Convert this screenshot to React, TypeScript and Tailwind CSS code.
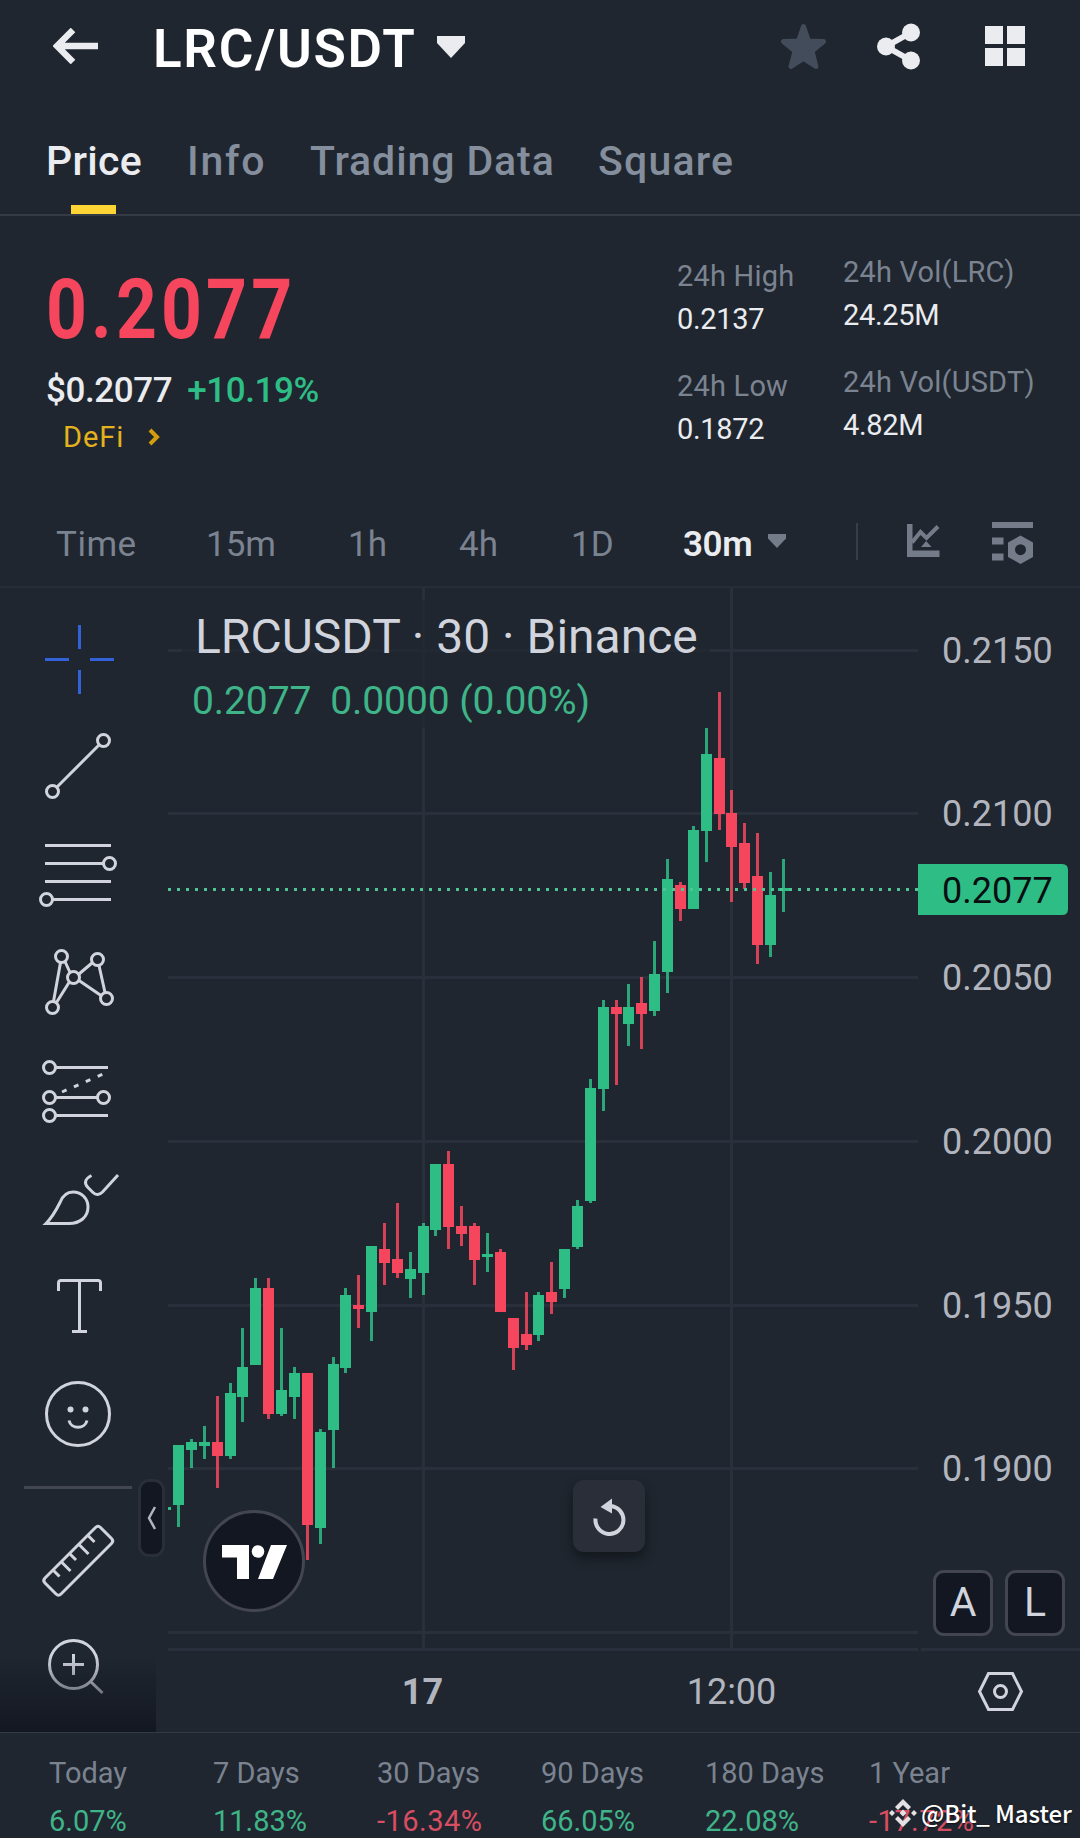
import React, { JSX } from "react";

interface Candle {
  x: number;
  high: number;
  top: number;
  bottom: number;
  low: number;
  up: boolean;
}

const UP = "#2ebd85";
const DOWN = "#f6465d";

// x, high, body top, body bottom, low, direction
const rawCandles: [number, number, number, number, number, number][] = [
  [178.5, 1445, 1445, 1505, 1527, 1],
  [191.5, 1439, 1442, 1450, 1468, 1],
  [204.5, 1426, 1442, 1446, 1459, 1],
  [217.5, 1396, 1442, 1456, 1488, 0],
  [230.5, 1383, 1393, 1456, 1459, 1],
  [242.5, 1328, 1367, 1397, 1422, 1],
  [255.5, 1278, 1288, 1365, 1365, 1],
  [268.5, 1278, 1288, 1414, 1419, 0],
  [281.5, 1328, 1390, 1414, 1416, 1],
  [294.5, 1367, 1373, 1397, 1419, 1],
  [307.5, 1373, 1373, 1525, 1560, 0],
  [320.5, 1429, 1432, 1528, 1544, 1],
  [333.5, 1357, 1364, 1430, 1468, 1],
  [345.5, 1288, 1295, 1368, 1373, 1],
  [358.5, 1275, 1305, 1309, 1328, 0],
  [371.5, 1246, 1246, 1312, 1341, 1],
  [384.5, 1223, 1249, 1263, 1285, 0],
  [397.5, 1203, 1259, 1273, 1278, 0],
  [410.5, 1252, 1269, 1279, 1298, 1],
  [423.5, 1223, 1226, 1273, 1295, 1],
  [435.5, 1164, 1164, 1230, 1236, 1],
  [448.5, 1151, 1164, 1227, 1249, 0],
  [461.5, 1206, 1226, 1234, 1246, 0],
  [474.5, 1223, 1226, 1260, 1285, 0],
  [487.5, 1233, 1254, 1257, 1272, 1],
  [500.5, 1249, 1252, 1312, 1312, 0],
  [513.5, 1318, 1318, 1348, 1370, 0],
  [526.5, 1292, 1334, 1345, 1350, 0],
  [538.5, 1292, 1295, 1335, 1341, 1],
  [551.5, 1262, 1292, 1302, 1314, 0],
  [564.5, 1249, 1249, 1289, 1298, 1],
  [577.5, 1200, 1206, 1247, 1249, 1],
  [590.5, 1079, 1088, 1201, 1203, 1],
  [603.5, 1000, 1007, 1089, 1111, 1],
  [616.5, 1000, 1007, 1014, 1085, 0],
  [628.5, 984, 1007, 1024, 1046, 1],
  [641.5, 977, 1003, 1014, 1049, 0],
  [654.5, 941, 974, 1011, 1016, 1],
  [667.5, 859, 879, 972, 993, 1],
  [680.5, 882, 885, 909, 921, 0],
  [693.5, 826, 830, 909, 909, 1],
  [706.5, 728, 754, 831, 862, 1],
  [719.5, 692, 758, 814, 830, 0],
  [731.5, 790, 813, 847, 902, 0],
  [744.5, 823, 843, 883, 889, 0],
  [757.5, 833, 876, 945, 964, 0],
  [770.5, 872, 895, 945, 957, 1],
  [783.5, 859, 888, 891, 912, 1],
];

const candles: Candle[] = rawCandles.map(([x, high, top, bottom, low, up]) => ({
  x,
  high,
  top,
  bottom,
  low,
  up: up === 1,
}));

const priceLevels = [
  { y: 650.5, label: "0.2150" },
  { y: 813.5, label: "0.2100" },
  { y: 977.5, label: "0.2050" },
  { y: 1141.5, label: "0.2000" },
  { y: 1305.5, label: "0.1950" },
  { y: 1468.5, label: "0.1900" },
  { y: 1632.5, label: "" },
];

const performance = [
  { label: "Today", value: "6.07%", up: true },
  { label: "7 Days", value: "11.83%", up: true },
  { label: "30 Days", value: "-16.34%", up: false },
  { label: "90 Days", value: "66.05%", up: true },
  { label: "180 Days", value: "22.08%", up: true },
  { label: "1 Year", value: "-17.72%", up: false },
];

const Header = () => (
  <header className="flex h-[92px] items-center">
    <svg width="46" height="36" viewBox="0 0 46 36" className="ml-[53px]" fill="none" stroke="#eaecef" strokeWidth="6.5">
      <path d="M45 18H5M20 2L4 18l16 16" />
    </svg>
    <h1 className="ml-[54px] w-[284px] pt-1.5 text-[53px] leading-none font-semibold tracking-[1.7px] whitespace-nowrap text-white">
      LRC/USDT
    </h1>
    <svg width="28" height="22" viewBox="0 0 28 22" className="mt-0.5" fill="#eaecef">
      <path d="M0 0h28v7L14 22 0 7z" />
    </svg>
    <svg width="45" height="47" viewBox="0 0 45 47" className="ml-[316px]" fill="#434c5a" stroke="#434c5a" strokeWidth="5" strokeLinejoin="round">
      <path d="M22.500 3.500l5 14.500 15 .5-11.500 9.500 4 15.500-12.500-8-12.500 8 4-15.500-11.500-9.500 15-.5z" />
    </svg>
    <svg width="43" height="47" viewBox="0 0 43 47" className="ml-[51px]" fill="#eaecef" stroke="#eaecef">
      <path d="M34 9.500L9 23.500l25 14" fill="none" strokeWidth="6" />
      <circle cx="34" cy="9.500" r="9" stroke="none" />
      <circle cx="9" cy="23.500" r="9" stroke="none" />
      <circle cx="34" cy="37.500" r="9" stroke="none" />
    </svg>
    <div className="ml-[65px] grid grid-cols-2 gap-1">
      <span className="h-[18px] w-[18px] bg-[#eaecef]" />
      <span className="h-[18px] w-[18px] bg-[#eaecef]" />
      <span className="h-[18px] w-[18px] bg-[#eaecef]" />
      <span className="h-[18px] w-[18px] bg-[#eaecef]" />
    </div>
  </header>
);

const Tabs = () => (
  <nav className="flex h-[124px] border-b-2 border-[#343b45] pt-[49px] text-[41px] leading-none font-medium tracking-[0.9px] whitespace-nowrap text-[#848e9c]">
    <div className="ml-[46px] flex w-[141px] flex-col text-[#eaecef]">
      <span className="tracking-[0.3px]">Price</span>
      <span className="mt-[23px] ml-[25px] h-[9px] w-[45px] bg-[#fcd535]" />
    </div>
    <span className="w-[123px] tracking-[1.8px]">Info</span>
    <span className="w-[288px]">Trading Data</span>
    <span className="tracking-[1.2px]">Square</span>
  </nav>
);

interface StatProps {
  label: string;
  value: string;
}

const Stat: React.FC<StatProps> = ({ label, value }) => (
  <div className="flex flex-col gap-[14px] text-[29px] leading-none whitespace-nowrap">
    <span className="tracking-[0.2px] text-[#7b8391]">{label}</span>
    <span className="tracking-[-0.3px] text-[#eaecef]">{value}</span>
  </div>
);

const Ticker = () => (
  <section className="flex h-[284px]">
    <div className="w-[677px] pt-[52px] pl-[46px]">
      <div className="w-fit origin-left scale-x-[0.86] text-[83px] leading-none font-bold tracking-[4.800px] text-[#f6465d]">0.2077</div>
      <div className="mt-[22px] flex gap-[15px] text-[35px] leading-none font-medium tracking-[-0.4px]">
        <span className="text-[#eaecef]">$0.2077</span>
        <span className="text-[#2ebd85]">+10.19%</span>
      </div>
      <div className="mt-[15px] flex items-center pl-[17px] text-[29px] leading-none text-[#e3b21c]">
        <span className="w-[85px] tracking-[0.9px]">DeFi</span>
        <svg width="12" height="18" viewBox="0 0 12 18" className="-mt-0.5" fill="none" stroke="#d29e0e" strokeWidth="4">
          <path d="M2 2l7 7-7 7" />
        </svg>
      </div>
    </div>
    <div className="flex w-[166px] flex-col gap-[38px] pt-[46px]">
      <Stat label="24h High" value="0.2137" />
      <Stat label="24h Low" value="0.1872" />
    </div>
    <div className="flex flex-col gap-[38px] pt-[42px]">
      <Stat label="24h Vol(LRC)" value="24.25M" />
      <Stat label="24h Vol(USDT)" value="4.82M" />
    </div>
  </section>
);

const Intervals = () => (
  <div className="flex h-[88px] items-center border-b-2 border-[#262d38] pl-[56px] text-[35px] leading-none whitespace-nowrap text-[#7b8391]">
    <span className="mt-0.5 w-[150px] tracking-[0.5px]">Time</span>
    <span className="mt-0.5 w-[142px]">15m</span>
    <span className="mt-0.5 w-[111px]">1h</span>
    <span className="mt-0.5 w-[112px]">4h</span>
    <span className="mt-0.5 w-[112px]">1D</span>
    <span className="mt-0.5 w-[85px] font-semibold tracking-[-0.4px] text-[#eaecef]">30m</span>
    <svg width="18" height="14" viewBox="0 0 18 14" className="-mt-1" fill="#747c8a">
      <path d="M0 0h18v4.500L9 14 0 4.500z" />
    </svg>
    <span className="-mt-1 ml-[70px] h-[37px] w-[2px] bg-[#373e49]" />
    <svg width="33" height="33" viewBox="0 0 33 33" className="-mt-1.5 ml-[49px]" fill="#747c8a">
      <path d="M0 0h5.500v26.500H32.500V33H0z" />
      <path d="M5 18.500l8.500-10.500 6 6L31 2.500" fill="none" stroke="#747c8a" strokeWidth="4" />
      <path d="M14 23h10.500L19.200 17z" />
    </svg>
    <svg width="42" height="43" viewBox="0 0 42 43" className="-mt-0.5 ml-[52px]" fill="#747c8a">
      <path d="M0 1h41v6H0zM0 16.500h11.500v7H0zM0 32.500h11.500v7H0z" />
      <path fillRule="evenodd" d="M28.500 14.500l12.500 7v14.500l-12.500 7-12.500-7V21.500zM28.500 23.200a5.500 5.500 0 1 0 0 11 5.500 5.500 0 1 0 0-11z" />
    </svg>
  </div>
);

interface ToolProps {
  viewBox: string;
  height: number;
  children: React.ReactNode;
}

const Tool: React.FC<ToolProps> = ({ viewBox, height, children }) => (
  <svg width="156" height={height} viewBox={viewBox} className="block shrink-0" fill="none" stroke="#d1d4dc" strokeWidth="3">
    {children}
  </svg>
);

const tools: { viewBox: string; height: number; icon: JSX.Element }[] = [
  {
    viewBox: "0 588 156 125",
    height: 125,
    icon: <path stroke="#3361d8" d="M79.500 625v24M79.500 670v24M45 659.500h24M90 659.500h24" />,
  },
  {
    viewBox: "0 713 156 106",
    height: 106,
    icon: (
      <>
        <path d="M57 787l42-42" />
        <circle cx="103.500" cy="740.500" r="6" />
        <circle cx="52.500" cy="791.500" r="6" />
      </>
    ),
  },
  {
    viewBox: "0 819 156 108",
    height: 108,
    icon: (
      <>
        <path d="M45 845.500h66M45 863.500h58M45 881.500h66M53 899.500h58" />
        <circle cx="109.500" cy="863.500" r="6" />
        <circle cx="46.500" cy="899.500" r="6" />
      </>
    ),
  },
  {
    viewBox: "0 927 156 109",
    height: 109,
    icon: (
      <>
        <path d="M60.500 962.500l-7 39M65 961.500l5 11M69 982.500l-12.500 20M79 974l13-11M79 980.500l22 15M99 965.500l6 27" />
        <circle cx="61.500" cy="956.500" r="6" />
        <circle cx="97.500" cy="959.500" r="6" />
        <circle cx="73.500" cy="977.500" r="6" />
        <circle cx="106.500" cy="998.500" r="6" />
        <circle cx="52.500" cy="1007.500" r="6" />
      </>
    ),
  },
  {
    viewBox: "0 1036 156 110",
    height: 110,
    icon: (
      <>
        <path d="M55.500 1067.500H108M55.500 1097.500H98M55.500 1115.500H108" />
        <path d="M62 1092l41-18" strokeDasharray="5 8" />
        <circle cx="49.500" cy="1067.500" r="6" />
        <circle cx="49.500" cy="1097.500" r="6" />
        <circle cx="103.500" cy="1097.500" r="6" />
        <circle cx="49.500" cy="1115.500" r="6" />
      </>
    ),
  },
  {
    viewBox: "0 1146 156 106",
    height: 106,
    icon: (
      <>
        <path d="M46 1223.500c7-7 10.500-14 14-21 2.500-6.500 7-10.500 13-10.500 9 0 15 7 15 15 0 10-8 16.500-19 16.500z" />
        <path d="M91.500 1175.500c-7 3.500-7.500 8-3.500 12l5 5c3 3 6.500 2.500 9.500-.5l15.500-17" />
      </>
    ),
  },
  {
    viewBox: "0 1252 156 108",
    height: 108,
    icon: <path d="M58.500 1291v-8q0-2.500 2.500-2.500h37q2.500 0 2.500 2.500v8M79.500 1281v50M72 1331.500h15" />,
  },
  {
    viewBox: "0 1360 156 108",
    height: 108,
    icon: (
      <>
        <circle cx="78" cy="1414" r="31.500" />
        <circle cx="70.500" cy="1409.500" r="3" fill="#d1d4dc" stroke="none" />
        <circle cx="85.500" cy="1409.500" r="3" fill="#d1d4dc" stroke="none" />
        <path d="M69 1420.500c2 9 16 9 18 0" />
      </>
    ),
  },
  {
    viewBox: "0 1468 156 40",
    height: 40,
    icon: <path d="M24 1487.500h108" stroke="#434651" />,
  },
  {
    viewBox: "0 1508 156 104",
    height: 104,
    icon: (
      <>
        <path
          strokeLinejoin="round"
          d="M95.500 1527.500q2.500-2.500 5 0l11 11q2.500 2.500 0 5l-50.500 50.500q-2.500 2.500-5 0l-11-11q-2.500-2.500 0-5z"
        />
        <path d="M53.500 1570.500l6 6M61.500 1562l9 9M70 1554l6 6M79 1544.500l9.500 9.500M88 1535.500l6.500 6.500" />
      </>
    ),
  },
  {
    viewBox: "0 1612 156 119",
    height: 119,
    icon: (
      <>
        <circle cx="73.500" cy="1664.500" r="24" />
        <path d="M63 1664.500h21M73.500 1654v21M91 1682l11.500 11" />
      </>
    ),
  },
];

const Toolbar = () => (
  <aside className="relative flex w-[156px] flex-col">
    {tools.map((tool) => (
      <Tool key={tool.viewBox} viewBox={tool.viewBox} height={tool.height}>
        {tool.icon}
      </Tool>
    ))}
    <div className="absolute bottom-0 left-0 h-[76px] w-full bg-gradient-to-b from-[#131722]/0 to-[#131722]" />
  </aside>
);

const Chart = () => (
  <div className="relative h-[1144px] w-[924px]">
    <svg width="924" height="1144" viewBox="156 588 924 1144" className="block font-[Roboto,sans-serif]">
      {/* grid */}
      <g fill="#2a303b">
        <rect x="422" y="588" width="3" height="1060" />
        <rect x="730" y="588" width="3" height="1060" />
        {priceLevels.map((level) => (
          <rect key={level.y} x="168" y={level.y - 1.5} width="750" height="3" />
        ))}
        <rect x="168" y="1648" width="750" height="3" />
        <rect x="921" y="1648" width="159" height="3" />
      </g>
      <rect x="182" y="600" width="528" height="64" fill="#1f262f" opacity="0.7" />
      <rect x="182" y="664" width="420" height="64" fill="#1f262f" opacity="0.7" />

      {/* candles */}
      <rect x="168" y="1507" width="3" height="3" fill={UP} />
      {candles.map((c) => (
        <g key={c.x} fill={c.up ? UP : DOWN}>
          <rect x={c.x - 1.5} y={c.high} width="3" height={c.low - c.high} opacity="0.85" />
          <rect x={c.x - 5.5} y={c.top} width="11" height={c.bottom - c.top} />
        </g>
      ))}

      {/* last price */}
      <path d="M168 889.500h750" stroke="#4fc596" strokeWidth="3" strokeDasharray="3 6" />
      <path d="M918 864h144q6 0 6 6v39q0 6-6 6H918z" fill={UP} />
      <g fontSize="36" fill="#b2b5be">
        {priceLevels.map((level) => (
          <text key={level.y} x="942" y={level.y + 12.7}>
            {level.label}
          </text>
        ))}
        <text x="942" y="903" fill="#0b0e11">
          0.2077
        </text>
        <text x="422.500" y="1704" textAnchor="middle" fontWeight="700">
          17
        </text>
        <text x="731.500" y="1704" textAnchor="middle">
          12:00
        </text>
      </g>

      <path d="M988.500 1673.500h24l9 18-9 18h-24l-9-18z" fill="none" stroke="#d1d4dc" strokeWidth="3" />
      <circle cx="1000.500" cy="1691.500" r="6" fill="none" stroke="#d1d4dc" strokeWidth="3" />
    </svg>

    {/* symbol legend */}
    <div className="absolute top-[25px] left-[39px] whitespace-nowrap">
      <div className="text-[48px] leading-[48px] text-[#d1d4dc]">LRCUSDT · 30 · Binance</div>
      <div className="mt-[21px] flex gap-[19px] text-[39px] leading-[39px] tracking-[-0.1px] text-[#3fb489]">
        <span className="-ml-[3px]">0.2077</span>
        <span>0.0000 (0.00%)</span>
      </div>
    </div>

    {/* toolbar handle */}
    <div className="absolute top-[891px] -left-[18px] flex h-[78px] w-[27px] items-center justify-center rounded-[11px] border-[3px] border-[#2a2e39] bg-[#131722]">
      <svg width="10" height="24" viewBox="0 0 10 24" fill="none" stroke="#b2b5be" strokeWidth="2.500">
        <path d="M8 1L2 12l6 11" />
      </svg>
    </div>

    {/* logo */}
    <div className="absolute top-[922px] left-[47px] flex h-[102px] w-[102px] items-center justify-center rounded-full border-[3px] border-[#434651] bg-[#131722]">
      <svg width="65" height="34" viewBox="0 0 65 34" className="mt-0.5" fill="#fff">
        <path d="M0 0h27v34H15V12.500H0zM49 0h16L51 34H36z" />
        <circle cx="36" cy="6.500" r="6.300" />
      </svg>
    </div>

    {/* reset */}
    <div className="absolute top-[892px] left-[417px] flex h-[72px] w-[72px] items-center justify-center rounded-[11px] bg-[#2a2e39] shadow-[0_6px_12px_rgba(0,0,0,0.4)]">
      <svg width="34" height="40" viewBox="0 0 34 40" className="mt-[3px] mr-px" fill="none" stroke="#d1d4dc" strokeWidth="4">
        <path d="M3.500 20.500a14 14 0 1 0 15-12.500" />
        <path d="M8.500 9L20 .5v15z" fill="#d1d4dc" stroke="none" />
      </svg>
    </div>

    <div className="absolute top-[982px] left-[777px] flex gap-[12px] text-[41px] leading-none text-[#d1d4dc]">
      <span className="flex h-[66px] w-[60px] items-center justify-center rounded-[11px] border-[3px] border-[#434651] bg-[#131722] pb-0.5">A</span>
      <span className="flex h-[66px] w-[60px] items-center justify-center rounded-[11px] border-[3px] border-[#434651] bg-[#131722] pb-0.5">L</span>
    </div>
  </div>
);

const Performance = () => (
  <footer className="relative h-[106px] border-t border-[#343b45] pt-[26px] pl-[49px]">
    <div className="flex text-[29px] leading-none whitespace-nowrap">
      {performance.map((item) => (
        <div key={item.label} className="flex w-[164px] shrink-0 flex-col gap-[19px]">
          <span className="text-[#7b8391]">{item.label}</span>
          <span className={item.up ? "text-[#3fb489]" : "tracking-[0.5px] text-[#d94d62]"}>{item.value}</span>
        </div>
      ))}
    </div>
    {/* watermark */}
    <div className="absolute top-[65px] left-[889px] flex items-center gap-[4px] whitespace-nowrap text-white">
      <svg width="28" height="28" viewBox="0 0 28 28" fill="#e3e1e1">
        <path d="M14 0l8 8-3 3-5-5-5 5-3-3zM14 28l8-8-3-3-5 5-5-5-3 3zM0 14l3-3 3 3-3 3zM22 14l3-3 3 3-3 3zM14 10.500l3.500 3.500-3.500 3.500-3.500-3.500z" />
      </svg>
      <span className="font-['Noto_Sans_CJK_SC',sans-serif] text-[24px] leading-[30px] font-medium tracking-[-0.1px] [text-shadow:0_1px_2px_rgba(0,0,0,0.6)]">
        @Bit_ Master
      </span>
    </div>
  </footer>
);

export default function App() {
  return (
    <main className="h-[1838px] w-[1080px] overflow-hidden bg-[#1f262f] font-[Roboto,sans-serif]">
      <Header />
      <Tabs />
      <Ticker />
      <Intervals />
      <section className="flex h-[1144px]">
        <Toolbar />
        <Chart />
      </section>
      <Performance />
    </main>
  );
}
